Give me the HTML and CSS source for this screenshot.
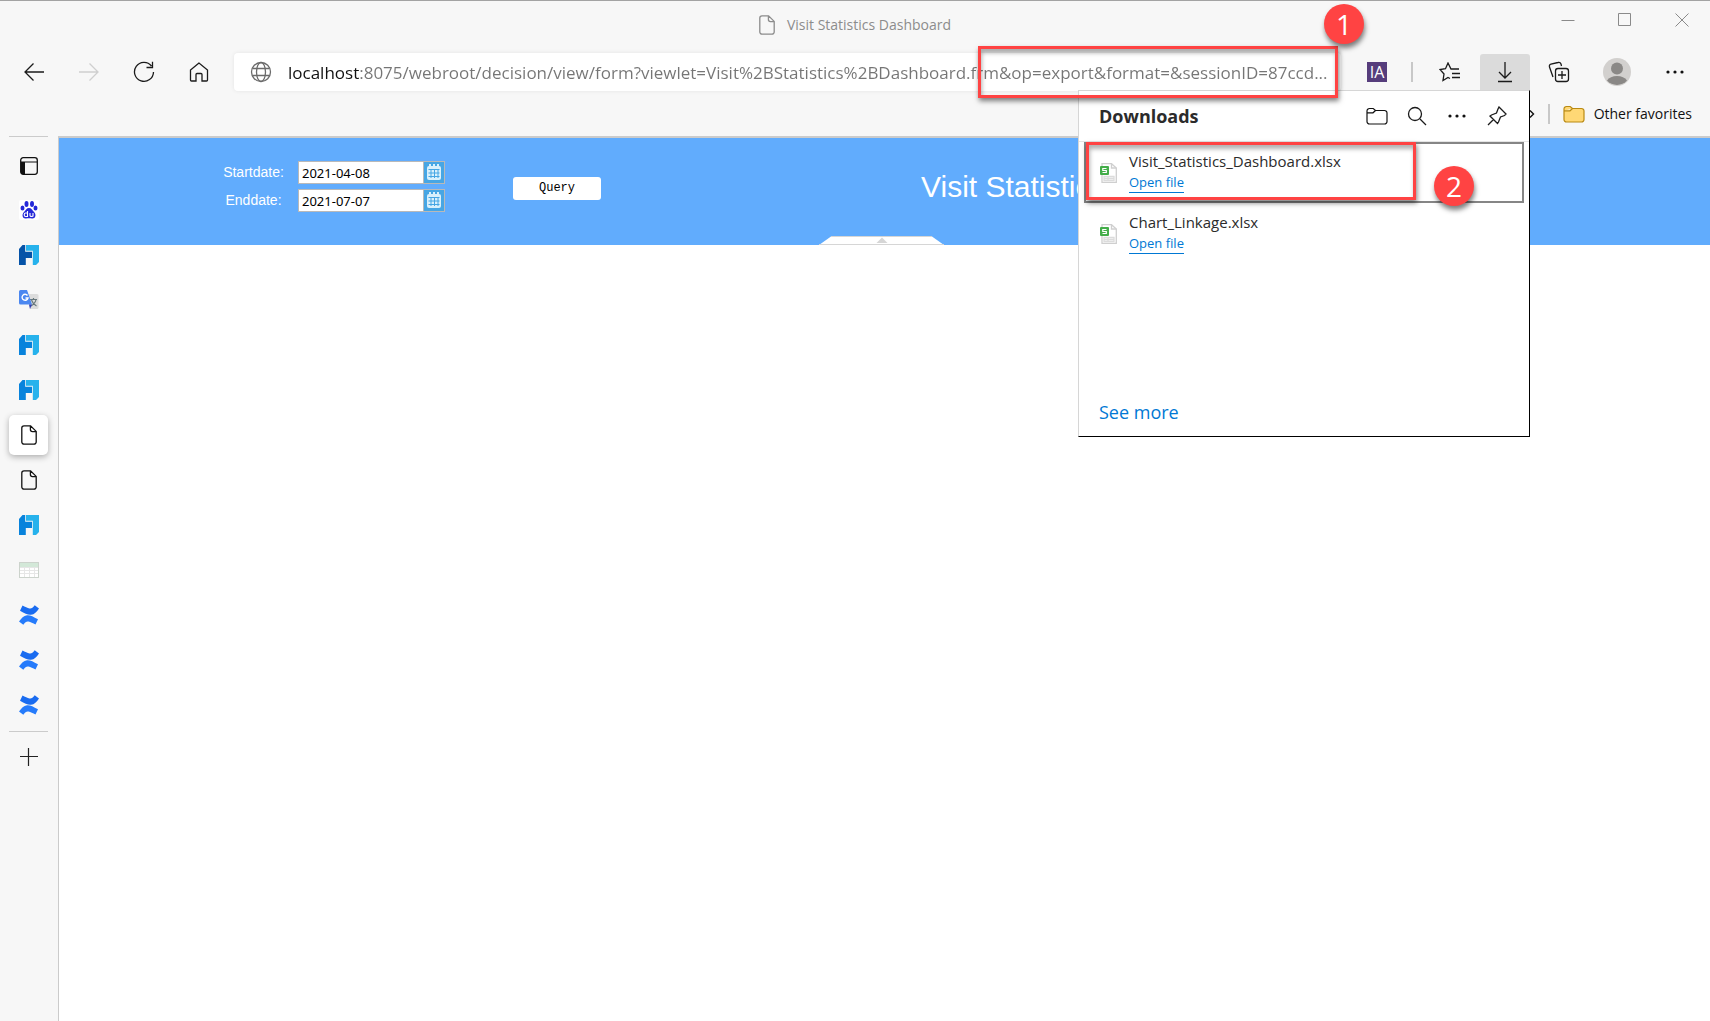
FILE: index.html
```html
<!DOCTYPE html>
<html lang="en">
<head>
    <meta charset="UTF-8">
    <meta name="viewport" content="width=device-width, initial-scale=1.0">
    <title>Visit Statistics Dashboard</title>
    <link rel="stylesheet" href="styles.css">
</head>
<body>
    <svg class="sprite" aria-hidden="true">
        <symbol id="page" viewBox="0 0 16 20">
            <path d="M3 .8h6.6L15.2 6.4V17a2.2 2.2 0 0 1-2.2 2.2H3A2.2 2.2 0 0 1 .8 17V3A2.2 2.2 0 0 1 3 .8zM9.4 1v3.6a2 2 0 0 0 2 2H15" fill="none" stroke="currentColor" stroke-width="1.3"/>
        </symbol>
        <symbol id="fr" viewBox="0 0 20 20">
            <path class="fr-left" d="M3.5 0H6.200v6.800H13V13H6.800v7H0V4z"/>
            <path class="fr-right" d="M7 0h13v17l-3 3h-3.200V5.800H7z"/>
        </symbol>
        <symbol id="confluence" viewBox="0 0 20 20">
            <path d="M3.500.5 1 5.800c5 2.700 8 4.400 11 4 3.500-.4 5.500-2.800 8-6.300L15.700.200c-2 2.500-3.200 3.600-5.200 3.200C8.500 3 6 1.700 3.500.5z" fill="#1a6cf0"/>
            <path d="M16.500 19.500 19 14.200c-5-2.700-8-4.400-11-4-3.500.4-5.500 2.800-8 6.300l4.300 3.300c2-2.500 3.200-3.600 5.200-3.200 2 .4 4.500 1.700 7 2.900z" fill="#267bfb"/>
        </symbol>
        <symbol id="calendar" viewBox="0 0 16 17">
            <rect x="1" y="2" width="14" height="14" rx="2" fill="#d9f0fc"/>
            <path d="M4 0v3M8 0v3M12 0v3" stroke="#d9f0fc" stroke-width="2"/>
            <path d="M2.500 5.500h11M2.500 9h11M2.500 12.500h11M5 5v9M8.500 5v9M12 5v9" stroke="#47a6e4"/>
        </symbol>
        <symbol id="sheet" viewBox="0 0 17 20">
            <path d="M2 .7h9.500L16.300 5v14.300H2z" fill="#fff" stroke="#cfcfcf"/>
            <path d="M11.500.7V5h4.800" fill="none" stroke="#cfcfcf"/>
            <path d="M4 13.500h10v4H4zM4 15.500h10M8 13.500v4" fill="none" stroke="#dcdcdc"/>
            <rect x="0" y="3" width="9" height="9" rx="1" fill="#43ad49"/>
            <path d="M6.500 5.500H2.800v2h3.500v2H2.500" fill="none" stroke="#fff" stroke-width="1.200"/>
        </symbol>
        <symbol id="folder" viewBox="0 0 22 18">
            <path d="M1 4a2.500 2.500 0 0 1 2.500-2.500h3.700L9.500 3.500h9A2.500 2.500 0 0 1 21 6v8.500a2.500 2.500 0 0 1-2.500 2.500h-15A2.500 2.500 0 0 1 1 14.500zM1 5.800h6L9.500 3.500" stroke="currentColor" stroke-width="1.200"/>
        </symbol>
        <symbol id="dots" viewBox="0 0 18 4">
            <g fill="currentColor" stroke="none"><circle cx="2" cy="2" r="1.600"/><circle cx="9" cy="2" r="1.600"/><circle cx="16" cy="2" r="1.600"/></g>
        </symbol>
    </svg>

    <div class="browser">
        <header class="titlebar">
            <div class="tab-title">
                <svg width="16" height="20"><use href="#page"/></svg>
                <span>Visit Statistics Dashboard</span>
            </div>
            <div class="window-controls">
                <button aria-label="Minimize"><svg width="14" height="14" viewBox="0 0 14 14"><path d="M.5 7.500h13"/></svg></button>
                <button aria-label="Maximize"><svg width="14" height="14" viewBox="0 0 14 14"><path d="M.5.500h12v12H.5z"/></svg></button>
                <button aria-label="Close"><svg width="14" height="14" viewBox="0 0 14 14"><path d="M.5.500l13 13M13.500.500l-13 13"/></svg></button>
            </div>
        </header>

        <nav class="toolbar">
            <button class="nav-button" aria-label="Back"><svg width="22" height="20" viewBox="0 0 22 20"><path d="M21 10H2M10.500 1.500L2 10l8.500 8.500"/></svg></button>
            <button class="nav-button" aria-label="Forward" disabled><svg width="22" height="20" viewBox="0 0 22 20"><path d="M1 10h19M11.500 1.500L20 10l-8.500 8.500"/></svg></button>
            <button class="nav-button" aria-label="Refresh"><svg width="22" height="22" viewBox="0 0 22 22"><path d="M18.500 5A9.500 9.500 0 1 0 20.500 11M19.500.800v5.700h-6"/></svg></button>
            <button class="nav-button" aria-label="Home"><svg width="20" height="20" viewBox="0 0 20 20"><path d="M10 1L1.500 8v10a1 1 0 0 0 1 1H7v-6.500a1 1 0 0 1 1-1h4a1 1 0 0 1 1 1V19h4.500a1 1 0 0 0 1-1V8z"/></svg></button>
            <div class="address">
                <svg class="globe" width="22" height="22" viewBox="0 0 22 22"><circle cx="11" cy="11" r="9.500"/><ellipse cx="11" cy="11" rx="4.500" ry="9.500"/><path d="M2.500 7.500h17M2.500 14.500h17"/></svg>
                <input class="url" type="text" aria-label="Address" value="localhost:8075/webroot/decision/view/form?viewlet=Visit%2BStatistics%2BDashboard.frm&amp;op=export&amp;format=&amp;sessionID=87ccd...">
                <span class="marker marker-url"></span>
                <span class="badge badge-one">1</span>
            </div>
            <div class="tools">
                <button class="extension" aria-label="IA extension">IA</button>
                <span class="divider"></span>
                <button class="tool" aria-label="Favorites"><svg width="22" height="20" viewBox="0 0 22 20"><path d="M14.500 7H12L9 1 6.500 6.700 1 7.500l4 4.500-1 6.500 5-3 2 1M14.500 7H20M13 11.500h8M13 15.500h8"/></svg></button>
                <div class="downloads">
                    <button class="tool active" aria-label="Downloads"><svg width="18" height="22" viewBox="0 0 18 22"><path d="M9 1v16M3 11l6 6 6-6M2 20.500h14"/></svg></button>
                    <section class="panel">
                        <div class="panel-header">
                            <h2>Downloads</h2>
                            <button aria-label="Open downloads folder"><svg width="22" height="18" fill="none"><use href="#folder"/></svg></button>
                            <button aria-label="Search downloads"><svg width="20" height="20" viewBox="0 0 20 20"><circle cx="8" cy="8" r="6.500"/><path d="M13 13l6 6"/></svg></button>
                            <button aria-label="More options"><svg width="18" height="4"><use href="#dots"/></svg></button>
                            <button aria-label="Pin downloads"><svg width="20" height="20" viewBox="0 0 20 20"><path d="M12 1l7 7-1.500 1.500-4 1.500-2 5-1 1.500L3 10l1.500-1 5-2 1.500-4zM6.500 13.500L1 19"/></svg></button>
                        </div>
                        <ul class="files">
                            <li class="file focused">
                                <svg width="17" height="20"><use href="#sheet"/></svg>
                                <div class="file-info">
                                    <span>Visit_Statistics_Dashboard.xlsx</span>
                                    <a href="#">Open file</a>
                                </div>
                                <span class="marker marker-file"></span>
                                <span class="badge badge-two">2</span>
                            </li>
                            <li class="file">
                                <svg width="17" height="20"><use href="#sheet"/></svg>
                                <div class="file-info">
                                    <span>Chart_Linkage.xlsx</span>
                                    <a href="#">Open file</a>
                                </div>
                            </li>
                        </ul>
                        <a class="see-more" href="#">See more</a>
                    </section>
                </div>
                <button class="tool collections" aria-label="Collections"><svg width="22" height="22" viewBox="0 0 22 22"><rect x="7.500" y="7.500" width="13" height="13" rx="2.500"/><path d="M14 10v8M10 14h8M5 16L1.500 6a2.500 2.500 0 0 1 1.500-3L10 1.500a2.500 2.500 0 0 1 3 1.500l.5 2"/></svg></button>
                <button class="profile" aria-label="Profile"><svg width="28" height="28" viewBox="0 0 28 28"><circle cx="14" cy="14" r="14" fill="#d2d0ce"/><circle cx="14" cy="10.500" r="6" fill="#8a8886"/><path d="M4 22.500c2-3 5.500-4.500 10-4.500s8 1.500 10 4.500a13.500 13.500 0 0 1-20 0z" fill="#8a8886"/></svg></button>
                <button class="tool" aria-label="Settings and more"><svg width="18" height="4"><use href="#dots"/></svg></button>
            </div>
        </nav>

        <div class="favorites">
            <svg class="chevron" width="6" height="8" viewBox="0 0 6 8"><path d="M1 .500L4.500 4 1 7.500"/></svg>
            <span class="divider"></span>
            <button class="favorites-folder">
                <svg width="22" height="18" fill="#ffd875"><use href="#folder"/></svg>
                Other favorites
            </button>
        </div>

        <div class="main">
            <aside class="sidebar">
                <button class="tab-actions" aria-label="Tab actions"><svg width="18" height="18" viewBox="0 0 18 18"><rect x=".7" y=".7" width="16.600" height="16.600" rx="2.500" fill="none" stroke="#111" stroke-width="1.300"/><path d="M1 5h16" stroke="#111"/><path d="M1 5h4v12H2l-1-1z" fill="#111"/></svg></button>
                <button aria-label="Baidu"><svg width="20" height="20" viewBox="0 0 20 20"><rect width="20" height="20" rx="2" fill="#fff"/><g fill="#2529d8"><ellipse cx="7.500" cy="4" rx="2" ry="3"/><ellipse cx="13" cy="4" rx="2" ry="3"/><ellipse cx="3.500" cy="8" rx="2" ry="2.600"/><ellipse cx="16.500" cy="8" rx="2" ry="2.600"/><path d="M10 8c2.500 0 3 2 5 4 3 3 1 7-2 6.500-2-.4-4-.4-6 0-3 .5-5-3.500-2-6.500 2-2 2.500-4 5-4z"/></g><path d="M8.500 11v5.500H6.700c-2 0-2-3.500 0-3.500h1.800M11 13v2.500c0 1.300 3 1.300 3 0V13v3.500" fill="none" stroke="#fff" stroke-width="1.100"/></svg></button>
                <button class="dark" aria-label="FineReport"><svg width="20" height="20"><use href="#fr"/></svg></button>
                <button aria-label="Google Translate"><svg width="20" height="20" viewBox="0 0 20 20"><path d="M8 4h10a1.500 1.500 0 0 1 1.500 1.500v12A1.500 1.500 0 0 1 18 19h-7z" fill="#dcdcdc"/><path d="M11 9.500h7M14.500 8v1.500M17 9.500c-.5 3-2.500 5-5 6.500M12.500 10c1 3 3 5 5 6" fill="none" stroke="#66777c" stroke-width="1.200"/><path d="M1.500 0H8l5 14.500H1.500A1.500 1.500 0 0 1 0 13V1.500A1.500 1.500 0 0 1 1.500 0z" fill="#4b87f0"/><path d="M10 14.500h3L11 19z" fill="#3340b8"/><path d="M8.500 5.500a3 3 0 1 0 .5 2.500H6.500" fill="none" stroke="#fff" stroke-width="1.400"/></svg></button>
                <button aria-label="FineReport"><svg width="20" height="20"><use href="#fr"/></svg></button>
                <button aria-label="FineReport"><svg width="20" height="20"><use href="#fr"/></svg></button>
                <button class="current" aria-label="Visit Statistics Dashboard"><svg width="16" height="20"><use href="#page"/></svg></button>
                <button aria-label="Untitled page"><svg width="16" height="20"><use href="#page"/></svg></button>
                <button aria-label="FineReport"><svg width="20" height="20"><use href="#fr"/></svg></button>
                <button aria-label="Spreadsheet"><svg width="20" height="16" viewBox="0 0 20 16"><rect x=".5" y=".5" width="19" height="15" fill="#fff" stroke="#ccd3cc"/><path d="M1 1h18v4H1z" fill="#d3e8d8"/><path d="M1 5.500h18M1 8.500h18M1 11.500h18M5.500 5v10M10.500 5v10M15.500 5v10" stroke="#e6e6e6"/></svg></button>
                <button aria-label="Confluence"><svg width="20" height="20"><use href="#confluence"/></svg></button>
                <button aria-label="Confluence"><svg width="20" height="20"><use href="#confluence"/></svg></button>
                <button aria-label="Confluence"><svg width="20" height="20"><use href="#confluence"/></svg></button>
                <button class="new-tab" aria-label="New tab"><svg width="18" height="18" viewBox="0 0 18 18"><path d="M8.500 0v18M0 8.500h18" stroke="#222" stroke-width="1.200"/></svg></button>
            </aside>

            <main class="content">
                <div class="dashboard-header">
                    <form class="query-form">
                        <label for="startdate">Startdate:</label>
                        <div class="date-field">
                            <input id="startdate" type="text" value="2021-04-08">
                            <button type="button" aria-label="Pick start date"><svg width="16" height="17"><use href="#calendar"/></svg></button>
                        </div>
                        <label for="enddate">Enddate:</label>
                        <div class="date-field">
                            <input id="enddate" type="text" value="2021-07-07">
                            <button type="button" aria-label="Pick end date"><svg width="16" height="17"><use href="#calendar"/></svg></button>
                        </div>
                        <button class="query" type="button">Query</button>
                    </form>
                    <h1>Visit Statistics Dashboard</h1>
                    <button class="collapse" aria-label="Collapse parameters"><svg width="125" height="9" viewBox="0 0 125 9"><path d="M0 9L12 .500h101L125 9z" fill="#fff"/><path d="M12 .500h101M0 8.500h125" stroke="#d6d6d6"/><path d="M57.500 7L63 1.500 68.500 7z" fill="#d6d6d6"/></svg></button>
                </div>
            </main>
        </div>
    </div>
</body>
</html>
```
FILE: styles.css
```css
* {
    box-sizing: border-box;
}

body {
    margin: 0;
    background-color: #f7f7f7;
    color: #111;
    font-family: "Open Sans", "Noto Sans", sans-serif;
    font-size: 14px;
}

button {
    display: flex;
    justify-content: center;
    align-items: center;
    padding: 0;
    border: 0;
    background: none;
    color: inherit;
    font: inherit;
    cursor: pointer;
}

svg {
    display: block;
    flex: none;
}

.sprite {
    position: absolute;
    width: 0;
    height: 0;
}

.browser {
    display: flex;
    flex-direction: column;
    min-height: 100vh;
    border-top: 1px solid #a3a3a3;
}

/* Title bar */
.titlebar {
    display: grid;
    grid-template-columns: 1fr auto 1fr;
    height: 47px;
}

.tab-title {
    grid-column: 2;
    display: flex;
    align-items: center;
    gap: 12px;
    color: #8c8c8c;
}

.window-controls {
    display: flex;
    justify-content: flex-end;
    height: 38px;
}

.window-controls button {
    width: 57px;
}

.window-controls svg {
    fill: none;
    stroke: #8a8a8a;
}

/* Toolbar */
.toolbar {
    display: flex;
    align-items: center;
    height: 48px;
    padding-left: 6px;
}

.toolbar svg {
    stroke-width: 1.3;
}

.nav-button,
.tool,
.panel-header button {
    fill: none;
    stroke: #1b1b1b;
}

.nav-button {
    width: 55px;
    height: 38px;
}

.nav-button:disabled {
    stroke: #cfcfcf;
}

.address {
    position: relative;
    display: flex;
    flex: 1;
    align-items: center;
    gap: 16px;
    height: 38px;
    margin-left: 8px;
    padding: 0 8px 0 16px;
    border-radius: 4px;
    background-color: #fff;
    box-shadow: 0 0 4px rgba(0, 0, 0, 0.08);
}

.globe {
    fill: none;
    stroke: #6b6b6b;
}

.url {
    flex: 1;
    min-width: 0;
    padding: 0;
    border: 0;
    outline: 0;
    background: linear-gradient(to right, #111 71px, #757575 71px) text;
    color: transparent;
    font-family: inherit;
    font-size: 17px;
}

.tools {
    display: flex;
    align-items: center;
    padding: 0 10px 0 26px;
}

.extension {
    width: 20px;
    height: 20px;
    background-color: #563d7c;
    color: #fff;
    font-size: 16px;
}

.divider {
    width: 2px;
    height: 20px;
    background-color: #c8c8c8;
}

.extension + .divider {
    margin: 0 12px 0 24px;
}

.tool {
    width: 50px;
    height: 36px;
}

.tool.active {
    border-radius: 3px 3px 0 0;
    background-color: #dbdbdb;
}

.tool + .profile,
.profile + .tool {
    margin-left: 8px;
}

.collections {
    margin-left: 4px;
}

.profile {
    width: 50px;
}

.downloads {
    position: relative;
    margin-left: 5px;
}

/* Downloads panel */
.panel {
    position: absolute;
    z-index: 1;
    top: 100%;
    right: 0;
    display: flex;
    flex-direction: column;
    width: 452px;
    min-height: 347px;
    border: 1px solid #d6d6d6;
    border-right-color: #000;
    border-bottom-color: #000;
    background-color: #fff;
}

.panel-header {
    display: flex;
    align-items: center;
    height: 51px;
    padding: 0 12px 0 20px;
    border-bottom: 1px solid #e5e5e5;
}

.panel-header h2 {
    flex: 1;
    margin: 0;
    color: #2b2b2b;
    font-size: 18px;
}

.panel-header button {
    width: 40px;
    height: 40px;
}

.files {
    margin: 0;
    padding: 0 5px;
    list-style: none;
}

.file {
    position: relative;
    display: flex;
    align-items: center;
    gap: 12px;
    height: 61px;
    padding-left: 14px;
    border: 2px solid transparent;
}

.file.focused {
    border-color: #868686;
}

.file-info {
    display: flex;
    flex-direction: column;
    align-items: flex-start;
    padding-bottom: 2px;
    color: #2b2b2b;
    font-size: 15px;
    line-height: 22px;
}

.file-info a {
    border-bottom: 1px solid #0078d4;
    color: #0078d4;
    font-size: 13px;
    line-height: 20px;
    text-decoration: none;
}

.see-more {
    margin: auto 20px 12px;
    color: #0078d4;
    font-size: 18px;
    text-decoration: none;
}

/* Numbered callouts */
.marker {
    position: absolute;
    border: 3px solid #ff4343;
    box-shadow: 1px 3px 5px rgba(0, 0, 0, 0.5), inset 1px 4px 4px rgba(0, 0, 0, 0.3);
    pointer-events: none;
}

.marker-url {
    z-index: 2;
    top: -7px;
    right: 3px;
    width: 360px;
    height: 52px;
}

.marker-file {
    top: -2px;
    left: 0;
    width: 330px;
    height: 58px;
}

.badge {
    position: absolute;
    z-index: 2;
    display: flex;
    justify-content: center;
    align-items: center;
    width: 40px;
    height: 40px;
    border-radius: 50%;
    background-color: #ff4343;
    box-shadow: 1px 4px 5px rgba(0, 0, 0, 0.5);
    color: #fff;
    font-size: 28px;
}

.badge-one {
    top: -49px;
    right: -23px;
}

.badge-two {
    top: 22px;
    right: 48px;
}

/* Favorites bar */
.favorites {
    display: flex;
    justify-content: flex-end;
    align-items: center;
    gap: 13px;
    height: 40px;
    padding: 0 18px 5px 0;
}

.chevron {
    fill: none;
    stroke: #111;
    stroke-width: 1.4;
}

.favorites-folder {
    gap: 9px;
}

.favorites-folder svg {
    color: #b98a13;
}

/* Page */
.main {
    display: flex;
    flex: 1;
}

.sidebar {
    display: flex;
    flex-direction: column;
    width: 58px;
    padding: 0 10px 0 9px;
}

.sidebar::before {
    content: "";
    height: 1px;
    margin-bottom: 7px;
    background-color: #cbcbcb;
}

.sidebar button {
    height: 45px;
}

.sidebar .tab-actions {
    height: 43px;
}

.sidebar .current {
    height: 40px;
    margin: 3px 0 2px;
    border-radius: 5px;
    background-color: #fff;
    box-shadow: 0 2px 6px rgba(0, 0, 0, 0.3);
}

.sidebar .new-tab {
    height: 50px;
    margin-top: 4px;
    border-top: 1px solid #cbcbcb;
}

.fr-left {
    fill: var(--left, #0883dc);
}

.fr-right {
    fill: #27b2ec;
}

.dark {
    --left: #0553a8;
}

.content {
    flex: 1;
    border-top: 2px solid #cbcbcb;
    border-left: 1px solid #cbcbcb;
    background-color: #fff;
}

.dashboard-header {
    display: grid;
    grid-template-columns: auto 1fr;
    grid-template-rows: 98px 9px;
    background-color: #61acfd;
    color: #fff;
    font-family: "Liberation Sans", Arial, sans-serif;
}

.query-form {
    display: grid;
    grid-template-columns: 61px 147px 142px;
    grid-template-rows: 22px 22px;
    gap: 6px 14px;
    align-items: center;
    padding: 23px 0 0 164px;
}

.query-form label {
    text-align: center;
}

.date-field {
    display: flex;
    height: 23px;
    border: 1px solid #b9b9b9;
}

.date-field input {
    flex: 1;
    min-width: 0;
    padding: 1px 3px 0;
    border: 0;
    outline: 0;
    background-color: #fff;
    color: #000;
    font-family: "Noto Sans", sans-serif;
    font-size: 13px;
}

.date-field button {
    width: 21px;
    border-left: 1px solid #b9b9b9;
    background-color: #47a6e4;
}

.query {
    grid-row: 1 / 3;
    grid-column: 3;
    height: 23px;
    margin: 4px 0 0 54px;
    border-radius: 3px;
    background-color: #fff;
    color: #000;
    font-family: "Liberation Mono", monospace;
    font-size: 12px;
}

.dashboard-header h1 {
    align-self: center;
    margin: 0 0 0 320px;
    font-size: 30px;
    font-weight: normal;
    white-space: nowrap;
}

.collapse {
    grid-row: 2;
    grid-column: 1 / 3;
    justify-self: center;
    margin-right: 6px;
}
```
